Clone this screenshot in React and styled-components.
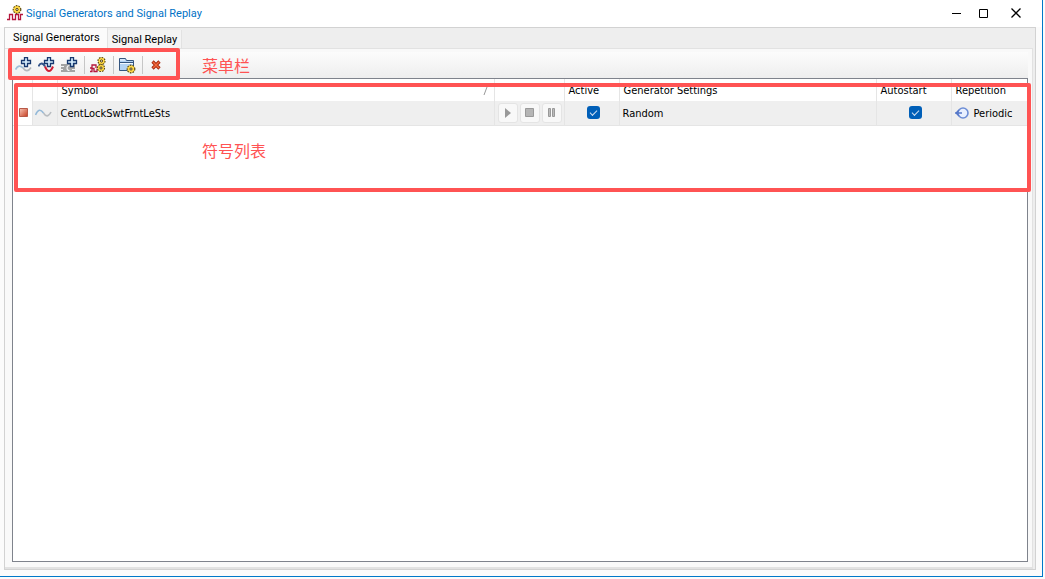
import React from "react";
import styled, { createGlobalStyle } from "styled-components";

const GlobalStyle = createGlobalStyle`
  * {
    box-sizing: border-box;
  }
  body {
    margin: 0;
    background: #fbfbfb;
    color: #000;
    font-family: "DejaVu Sans Condensed", Tahoma, "Noto Sans CJK SC", sans-serif;
    font-size: 11px;
    line-height: 14px;
  }
  button {
    font: inherit;
    color: inherit;
    padding: 0;
    border: 0;
    background: none;
  }
  svg {
    display: block;
    flex: none;
  }
`;

const signals = [
  {
    name: "CentLockSwtFrntLeSts",
    active: true,
    settings: "Random",
    autostart: true,
    repetition: "Periodic",
  },
];

const Gear = ({ x, y, r = 3 }) => (
  <g transform={`translate(${x} ${y})`}>
    <circle r={r + 0.8} fill="#f7cf3b" stroke="#5a4a14" strokeWidth="1.2" strokeDasharray="1.6 1.1" />
    <circle r={r} fill="#ffd94a" />
    <circle r="1.1" fill="#fff" stroke="#4a3c12" strokeWidth="1" />
  </g>
);

const Plus = () => (
  <path
    d="M9.5.5h3v3h3v3h-3v3h-3v-3h-3v-3h3z"
    fill="#d9f0ff"
    stroke="#16386f"
    strokeWidth="1.3"
  />
);

const PulseGearIcon = () => (
  <svg width="16" height="16" viewBox="0 0 16 16" aria-hidden="true">
    <path
      d="M0 14.5h2.5v-5h3v5h3v-5h3v5h2v-5H16"
      fill="none"
      stroke="#b5173c"
      strokeWidth="1.3"
    />
    <Gear x={10} y={4.5} r={3} />
  </svg>
);

const AddGeneratorIcon = () => (
  <svg width="17" height="17" viewBox="0 0 17 17" aria-hidden="true">
    <path d="M.5 12.5C2.500 8.500 5.500 8 8 11" fill="none" stroke="#9fc0da" strokeWidth="1.700" />
    <path d="M8 11C10.500 14.500 13.500 14.500 16 10.500" fill="none" stroke="#b4b8bc" strokeWidth="1.700" />
    <Plus />
  </svg>
);

const AddSignalIcon = () => (
  <svg width="17" height="17" viewBox="0 0 17 17" aria-hidden="true">
    <path d="M.5 9.500C2 5.500 5 5.500 7 9.500" fill="none" stroke="#35558a" strokeWidth="1.800" />
    <path d="M7 9.500C9.500 15.500 12.500 15.500 15 9.500" fill="none" stroke="#d01e34" strokeWidth="2" />
    <Plus />
  </svg>
);

const AddReplayIcon = () => (
  <svg width="17" height="17" viewBox="0 0 17 17" aria-hidden="true">
    <path d="M0 7h14v8H0z" fill="#a3a3a3" />
    <path
      d="M8.500 8.500a2.500 2.500 0 1 0 0 5M0 9.500h3M0 12.500h2M11 12.500h3"
      fill="none"
      stroke="#f4f4f4"
      strokeWidth="1.200"
    />
    <Plus />
  </svg>
);

const GeneratorSetupIcon = () => (
  <svg width="17" height="17" viewBox="0 0 17 17" aria-hidden="true">
    <path
      d="M0 14.500h2v-3h2v3h3v-3M0 11h2V8h4v3"
      fill="none"
      stroke="#b5173c"
      strokeWidth="1.300"
    />
    <Gear x={11.500} y={4} r={2.700} />
    <Gear x={11} y={11} r={2.700} />
  </svg>
);

const FolderIcon = () => (
  <svg width="17" height="17" viewBox="0 0 17 17" aria-hidden="true">
    <path d="M.5 13.500v-12h6l1 2h7v10z" fill="#b4d3f3" stroke="#34557f" />
    <path d="M1 5.500h13" stroke="#34557f" />
    <path d="M1 3h5M1 6.500h13" stroke="#f2f8ff" />
    <Gear x={12} y={12} r={3} />
  </svg>
);

const DeleteIcon = () => (
  <svg width="11" height="11" viewBox="0 0 11 11" aria-hidden="true">
    <path d="M1.500 1.500l7 7M8.500 1.500l-7 7" stroke="#a3240c" strokeWidth="3.200" />
    <path d="M2 2l6 6M8 2L2 8" stroke="#f26a3c" strokeWidth="1.500" />
  </svg>
);

const StatusIcon = () => (
  <svg width="9" height="9" viewBox="0 0 9 9" aria-hidden="true">
    <defs>
      <linearGradient id="status" x2="1" y2="1">
        <stop stopColor="#f8c8b8" />
        <stop offset="1" stopColor="#c63c20" />
      </linearGradient>
    </defs>
    <path d="M.5.5h8v8h-8z" fill="url(#status)" stroke="#b85a48" />
  </svg>
);

const WaveIcon = () => (
  <svg width="17" height="10" viewBox="0 0 17 10" aria-hidden="true">
    <path d="M.5 7C3 1 5.500 1 8.500 5" fill="none" stroke="#94b9d8" strokeWidth="1.600" />
    <path d="M8.500 5C11 9 13.500 9 16 4" fill="none" stroke="#b9bdc1" strokeWidth="1.600" />
  </svg>
);

const PeriodicIcon = () => (
  <svg width="14" height="14" viewBox="0 0 14 14" aria-hidden="true">
    <circle cx="8" cy="7" r="5" fill="#e9f0ff" stroke="#6c8dd6" strokeWidth="1.600" />
    <path d="M0 7h7M4 4L1 7l3 3" fill="none" stroke="#5577c8" strokeWidth="1.300" />
  </svg>
);

const Window = styled.main`
  position: relative;
  display: flex;
  flex-direction: column;
  height: calc(100vh - 2px);
  margin-right: 2px;
  padding: 0 6px 6px 4px;
  border: solid #0078c8;
  border-width: 0 1px 1px 0;
  background: #fbfbfb;
`;

const TitleBar = styled.header`
  display: flex;
  align-items: center;
  height: 27px;
  margin: 0 -6px 0 -4px;
  padding: 0 8px 1px 7px;
  background: #fff;
`;

const Title = styled.h1`
  flex: 1;
  margin: 0;
  padding: 2px 0 0 3px;
  color: #0072c6;
  font-family: Roboto, sans-serif;
  font-size: 11px;
  font-weight: normal;
`;

const WindowButton = styled.button`
  display: grid;
  place-items: center;
  width: ${(props) => (props.$wide ? "37px" : "27px")};
  height: 24px;
`;

const Panel = styled.section`
  display: flex;
  flex: 1;
  flex-direction: column;
  min-height: 0;
  border: 1px solid #d2d2d2;
  background: #eee;
`;

const TabList = styled.div`
  display: flex;
  align-items: flex-end;
  height: 20px;
`;

const Tab = styled.button`
  height: ${(props) => (props.$selected ? "20px" : "18px")};
  padding: ${(props) => (props.$selected ? "0 7px 0 8px" : "2px 4px 0")};
  border-right: 1px solid #e2e2e2;
  background: ${(props) => (props.$selected ? "#fbfbfb" : "#f4f4f4")};
  font-family: Roboto, sans-serif;
`;

const TabPage = styled.div`
  display: flex;
  flex: 1;
  flex-direction: column;
  min-height: 0;
  margin-right: 2px;
  padding: 3px 4px 5px 7px;
  border: solid #e2e2e2;
  border-width: 1px 1px 2px 0;
  background: #f9f9f9;
`;

const ToolBar = styled.div`
  display: flex;
  align-items: center;
  height: 26px;
  background: linear-gradient(#fcfcfc, #eee);
`;

const ToolButton = styled.button`
  display: grid;
  place-items: center;
  width: 23px;
  height: 22px;
`;

const Separator = styled.span`
  width: 1px;
  height: 18px;
  margin: 0 2px 0 3px;
  background: #c6c6c6;
`;

const ListFrame = styled.div`
  flex: 1;
  border: 1px solid #7f838c;
  background: #fff;
`;

const SignalTable = styled.table`
  width: 100%;
  table-layout: fixed;
  border-collapse: collapse;
  th,
  td {
    overflow: hidden;
    padding: 0 0 0 3px;
    border-right: 1px solid #e5e5e5;
    text-align: left;
    font-weight: normal;
    white-space: nowrap;
  }
  th {
    height: 22px;
    padding: 2px 0 0 4px;
  }
  td {
    height: 24px;
    border-bottom: 1px solid #e5e5e5;
    background: #efefef;
  }
  td:first-child {
    padding-left: 2px;
    background: #fff;
  }
  td:nth-child(2) {
    padding-left: 2px;
  }
  th:last-child,
  td:last-child {
    border-right: 0;
  }
`;

const Column = styled.col`
  width: ${(props) => (props.$width ? `${props.$width}px` : "auto")};
`;

const CellContent = styled.div`
  display: flex;
  align-items: center;
  justify-content: ${(props) => props.$justify || "flex-start"};
  gap: ${(props) => props.$gap || 0}px;
  padding-right: ${(props) => props.$end || 0}px;
`;

const CellText = styled.span`
  display: block;
  padding-top: 2px;
`;

const PlayerButton = styled.button`
  display: grid;
  place-items: center;
  width: 20px;
  height: 20px;
  border: 1px solid #e4e4e4;
  border-radius: 3px;
  background: #f8f8f8;
`;

const CheckBox = styled.input`
  display: grid;
  place-items: center;
  width: 13px;
  height: 13px;
  margin: 0;
  border-radius: 3px;
  appearance: none;
  background: #005fb8;
  &:checked::before {
    content: "";
    width: 6px;
    height: 3px;
    border: solid #cfe0f2;
    border-width: 0 0 1px 1px;
    transform: translateY(-1px) rotate(-45deg);
  }
`;

const Outline = styled.div`
  position: absolute;
  pointer-events: none;
  border: 4px solid #ff5353;
  border-radius: 2px;
`;

const MenuOutline = styled(Outline)`
  top: 48px;
  left: 8px;
  width: 172px;
  height: 32px;
`;

const ListOutline = styled(Outline)`
  top: 83px;
  left: 14px;
  right: 11px;
  height: 109px;
`;

const Note = styled.span`
  position: absolute;
  top: ${(props) => props.$top}px;
  left: 202px;
  color: #ff5353;
  font-family: "Noto Sans CJK SC", sans-serif;
  font-size: 16px;
  line-height: 20px;
`;

const App = () => {
  return (
    <>
      <GlobalStyle />
      <Window>
        <TitleBar>
          <PulseGearIcon />
          <Title>Signal Generators and Signal Replay</Title>
          <WindowButton aria-label="Minimize">
            <svg width="9" height="9">
              <path d="M0 4.500h9" stroke="#000" />
            </svg>
          </WindowButton>
          <WindowButton aria-label="Maximize">
            <svg width="9" height="9">
              <path d="M.5.5h8v8h-8z" fill="none" stroke="#000" />
            </svg>
          </WindowButton>
          <WindowButton aria-label="Close" $wide>
            <svg width="10" height="10">
              <path d="M.5.5l9 9M9.500.5l-9 9" stroke="#000" strokeWidth="1.300" />
            </svg>
          </WindowButton>
        </TitleBar>
        <Panel>
          <TabList role="tablist">
            <Tab role="tab" aria-selected="true" $selected>
              Signal Generators
            </Tab>
            <Tab role="tab" aria-selected="false">
              Signal Replay
            </Tab>
          </TabList>
          <TabPage>
            <ToolBar>
              <ToolButton aria-label="Add generator">
                <AddGeneratorIcon />
              </ToolButton>
              <ToolButton aria-label="Add signal generator">
                <AddSignalIcon />
              </ToolButton>
              <ToolButton aria-label="Add replay">
                <AddReplayIcon />
              </ToolButton>
              <Separator />
              <ToolButton aria-label="Configure generator">
                <GeneratorSetupIcon />
              </ToolButton>
              <Separator />
              <ToolButton aria-label="Configure folder">
                <FolderIcon />
              </ToolButton>
              <Separator />
              <ToolButton aria-label="Delete">
                <DeleteIcon />
              </ToolButton>
            </ToolBar>
            <ListFrame>
              <SignalTable>
                <colgroup>
                  <Column $width={19} />
                  <Column $width={25} />
                  <Column />
                  <Column $width={70} />
                  <Column $width={55} />
                  <Column $width={257} />
                  <Column $width={75} />
                  <Column $width={76} />
                </colgroup>
                <thead>
                  <tr>
                    <th />
                    <th />
                    <th>
                      <CellContent $justify="space-between" $end={6}>
                        Symbol
                        <svg width="5" height="8" aria-hidden="true">
                          <path d="M1 8L4 0" stroke="#999" />
                        </svg>
                      </CellContent>
                    </th>
                    <th />
                    <th>Active</th>
                    <th>Generator Settings</th>
                    <th>Autostart</th>
                    <th>Repetition</th>
                  </tr>
                </thead>
                <tbody>
                  {signals.map((signal) => (
                    <tr key={signal.name}>
                      <td>
                        <CellContent $justify="center">
                          <StatusIcon />
                        </CellContent>
                      </td>
                      <td>
                        <WaveIcon />
                      </td>
                      <td>
                        <CellText>{signal.name}</CellText>
                      </td>
                      <td>
                        <CellContent $gap={2}>
                          <PlayerButton aria-label="Start">
                            <svg width="8" height="10">
                              <path d="M1 0l6 5-6 5z" fill="#999" />
                            </svg>
                          </PlayerButton>
                          <PlayerButton aria-label="Stop">
                            <svg width="9" height="9">
                              <path d="M.5.5h8v8h-8z" fill="#b5b5b5" stroke="#999" />
                            </svg>
                          </PlayerButton>
                          <PlayerButton aria-label="Pause">
                            <svg width="8" height="9">
                              <path d="M.5.5h2v8h-2zM4.500.5h2v8h-2z" fill="#bbb" stroke="#999" />
                            </svg>
                          </PlayerButton>
                        </CellContent>
                      </td>
                      <td>
                        <CellContent $justify="center">
                          <CheckBox
                            type="checkbox"
                            aria-label="Active"
                            defaultChecked={signal.active}
                          />
                        </CellContent>
                      </td>
                      <td>
                        <CellText>{signal.settings}</CellText>
                      </td>
                      <td>
                        <CellContent $justify="center">
                          <CheckBox
                            type="checkbox"
                            aria-label="Autostart"
                            defaultChecked={signal.autostart}
                          />
                        </CellContent>
                      </td>
                      <td>
                        <CellContent $gap={5}>
                          <PeriodicIcon />
                          <CellText>{signal.repetition}</CellText>
                        </CellContent>
                      </td>
                    </tr>
                  ))}
                </tbody>
              </SignalTable>
            </ListFrame>
          </TabPage>
        </Panel>
        <MenuOutline />
        <ListOutline />
        <Note $top={55}>菜单栏</Note>
        <Note $top={140}>符号列表</Note>
      </Window>
    </>
  );
};

export default App;
